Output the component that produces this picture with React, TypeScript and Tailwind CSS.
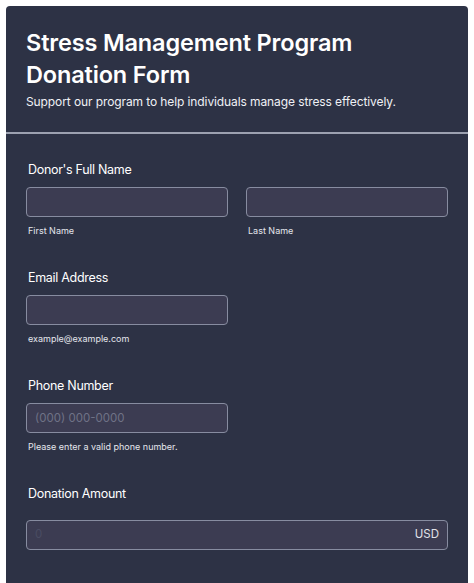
export default function App() {
  const font = { fontFamily: 'Inter, "Noto Sans", sans-serif' };

  return (
    <div className="min-h-[583px] bg-white p-[6px] pb-0" style={font}>
      <div className="bg-[#2d3245] rounded-t-[4px] min-h-[600px] text-white">
        <div className="px-[20px] pt-[21px] pb-[20px]">
          <h1 className="text-[23.5px] leading-[32px] font-semibold tracking-[-0.15px]">
            Stress Management Program
            <br />
            Donation Form
          </h1>
          <p className="mt-[1px] text-[12px] leading-[20px] tracking-[-0.1px] text-[#f0f1f5]">
            Support our program to help individuals manage stress effectively.
          </p>
        </div>
        <div className="h-[2px] bg-[#9ca1b0]" />

        <div className="px-[20px] pt-[27px]">
          <div>
            <label className="block text-[12.5px] leading-[18px] tracking-[-0.3px] ml-[2px]">Donor's Full Name</label>
            <div className="grid grid-cols-2 gap-[18px] mt-[8px]">
              <div>
                <input className="w-full h-[30px] rounded-[4px] border border-[#878ca0] bg-[#3c3c52] outline-none" />
                <div className="text-[9px] leading-[14px] mt-[7px] ml-[2px] text-[#e4e6ec]">First Name</div>
              </div>
              <div>
                <input className="w-full h-[30px] rounded-[4px] border border-[#878ca0] bg-[#3c3c52] outline-none" />
                <div className="text-[9px] leading-[14px] mt-[7px] ml-[2px] text-[#e4e6ec]">Last Name</div>
              </div>
            </div>
          </div>

          <div className="mt-[31px]">
            <label className="block text-[12.5px] leading-[18px] tracking-[-0.3px] ml-[2px]">Email Address</label>
            <div className="grid grid-cols-2 gap-[18px] mt-[8px]">
              <div>
                <input className="w-full h-[30px] rounded-[4px] border border-[#878ca0] bg-[#3c3c52] outline-none" />
                <div className="text-[9px] leading-[14px] mt-[7px] ml-[2px] text-[#e4e6ec]">example@example.com</div>
              </div>
            </div>
          </div>

          <div className="mt-[31px]">
            <label className="block text-[12.5px] leading-[18px] tracking-[-0.3px] ml-[2px]">Phone Number</label>
            <div className="grid grid-cols-2 gap-[18px] mt-[8px]">
              <div>
                <input
                  placeholder="(000) 000-0000"
                  className="w-full h-[30px] rounded-[4px] border border-[#878ca0] bg-[#3c3c52] px-[8px] text-[11.5px] outline-none placeholder:text-[#6f7286]"
                />
                <div className="text-[9px] leading-[14px] mt-[7px] ml-[2px] text-[#e4e6ec]">Please enter a valid phone number.</div>
              </div>
            </div>
          </div>

          <div className="mt-[31px]">
            <label className="block text-[12.5px] leading-[18px] tracking-[-0.3px] ml-[2px]">Donation Amount</label>
            <div className="mt-[17px] flex items-center h-[30px] rounded-[4px] border border-[#878ca0] bg-[#3c3c52] px-[8px]">
              <input
                placeholder="0"
                className="flex-1 min-w-0 bg-transparent text-[11.5px] outline-none placeholder:text-[#4a4c62]"
              />
              <span className="text-[11.5px] text-[#e0e1e8]">USD</span>
            </div>
          </div>
        </div>
      </div>
    </div>
  );
}
